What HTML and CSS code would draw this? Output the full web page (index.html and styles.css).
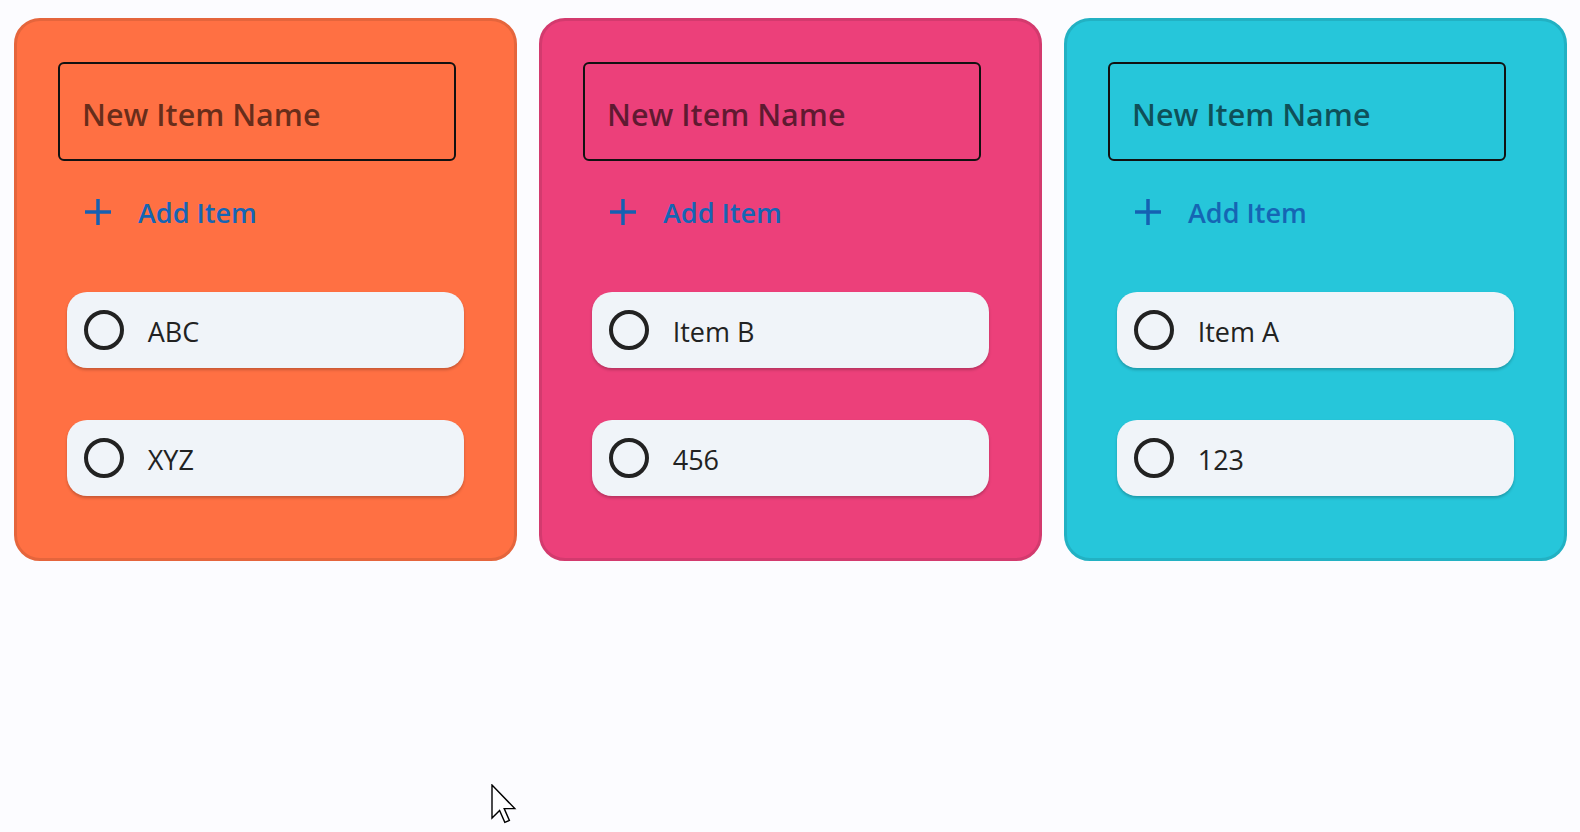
FILE: index.html
```html
<!DOCTYPE html>
<html>
<head>
<meta charset="utf-8">
<link rel="stylesheet" href="styles.css">
</head>
<body>
<div class="board">
  <section class="card orange">
    <input class="name-input" type="text" placeholder="New Item Name">
    <button class="add-btn"><svg class="plus" viewBox="0 0 28 28"><path d="M14 1v26M1 14h26"/></svg><span>Add Item</span></button>
    <ul class="items">
      <li class="item"><span class="check"></span><span class="label">ABC</span></li>
      <li class="item"><span class="check"></span><span class="label">XYZ</span></li>
    </ul>
  </section>
  <section class="card pink">
    <input class="name-input" type="text" placeholder="New Item Name">
    <button class="add-btn"><svg class="plus" viewBox="0 0 28 28"><path d="M14 1v26M1 14h26"/></svg><span>Add Item</span></button>
    <ul class="items">
      <li class="item"><span class="check"></span><span class="label">Item B</span></li>
      <li class="item"><span class="check"></span><span class="label">456</span></li>
    </ul>
  </section>
  <section class="card cyan">
    <input class="name-input" type="text" placeholder="New Item Name">
    <button class="add-btn"><svg class="plus" viewBox="0 0 28 28"><path d="M14 1v26M1 14h26"/></svg><span>Add Item</span></button>
    <ul class="items">
      <li class="item"><span class="check"></span><span class="label">Item A</span></li>
      <li class="item"><span class="check"></span><span class="label">123</span></li>
    </ul>
  </section>
</div>
<svg class="cursor" viewBox="0 0 13 20" width="26" height="40"><path d="M0.5 0.5v16.5l3.8-3.8 2.6 6 2.3-1-2.6-5.9h5.3z" fill="#fff" stroke="#000" stroke-width="0.7" stroke-linejoin="miter"/></svg>
</body>
</html>
```

FILE: styles.css
```css
* { box-sizing: border-box; }
html, body { margin: 0; padding: 0; }
body {
  background: #fcfcff;
  font-family: "Open Sans", "Noto Sans", sans-serif;
  width: 1580px;
  height: 832px;
  overflow: hidden;
  position: relative;
}
.board {
  display: grid;
  grid-template-columns: repeat(3, 1fr);
  gap: 22px;
  padding: 18px 13px 0 14px;
  align-items: start;
}
.card {
  border: 3px solid;
  border-radius: 26px;
  padding: 41px 0 62px;
  display: flex;
  flex-direction: column;
}
.orange { background: #ff7043; border-color: #e5653c; }
.pink { background: #ec407a; border-color: #d33a6e; }
.cyan { background: #26c6da; border-color: #22b1c3; }
.name-input {
  width: 80%;
  margin-left: 41px;
  height: 99px;
  border: 2px solid #111;
  border-radius: 6px;
  background: transparent;
  padding: 4px 0 0 22px;
  font-family: inherit;
  font-size: 30.5px;
  font-weight: 600;
  outline: none;
}
.name-input::placeholder { color: rgba(0,0,0,0.6); }
.add-btn {
  align-self: flex-start;
  margin: 25px 0 0 67px;
  height: 52px;
  display: flex;
  align-items: center;
  gap: 26px;
  border: none;
  background: transparent;
  padding: 0;
  font-family: inherit;
  font-size: 27px;
  font-weight: 600;
  color: #1565b4;
  cursor: pointer;
}
.plus { width: 28px; height: 28px; }
.plus path { stroke: #1560b2; stroke-width: 3.5; fill: none; }
.items {
  list-style: none;
  margin: 54px 0 0;
  padding: 0;
  display: flex;
  flex-direction: column;
  gap: 52px;
  align-items: center;
}
.item {
  width: 80%;
  height: 76px;
  background: #f0f4f9;
  border-radius: 20px;
  box-shadow: 0 2px 3px rgba(0,0,0,0.22);
  display: flex;
  align-items: center;
  padding-left: 17px;
  gap: 24px;
}
.check {
  width: 40px;
  height: 40px;
  border: 4px solid #222;
  border-radius: 50%;
  flex: none;
}
.label {
  font-size: 27px;
  color: #222;
  padding-top: 2px;
}
.cursor {
  position: absolute;
  left: 491px;
  top: 784px;
}
```
